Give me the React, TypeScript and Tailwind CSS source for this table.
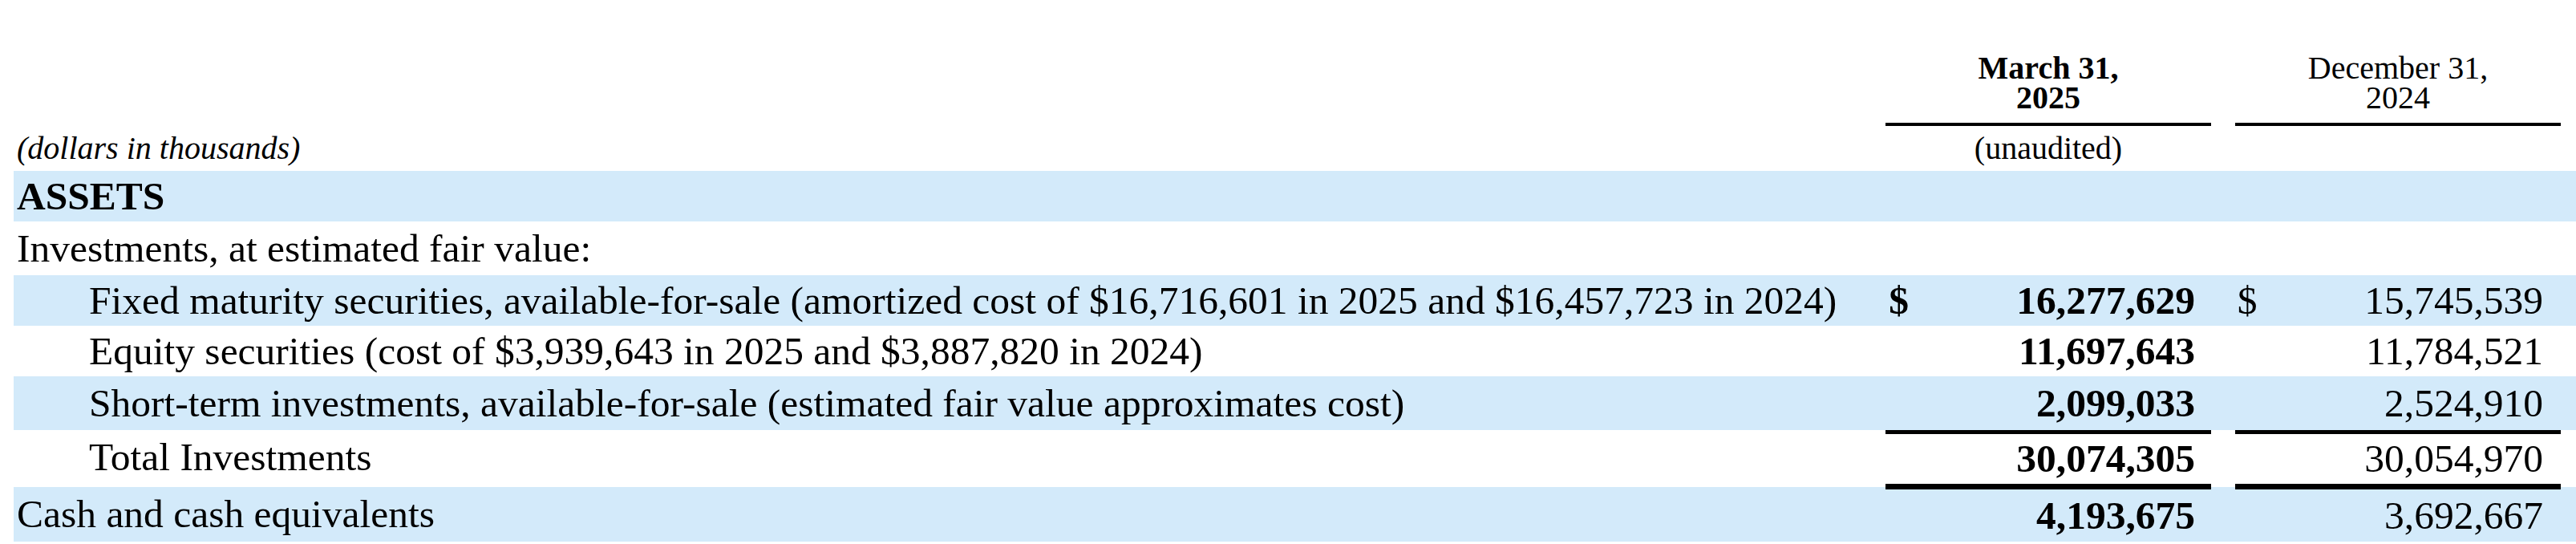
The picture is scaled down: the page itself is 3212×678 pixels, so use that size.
import React from "react";

const COLS = "grid grid-cols-[2334px_406px_30px_406px]";

type RowProps = {
  h: string;
  blue?: boolean;
  label: string;
  indent?: boolean;
  boldLabel?: boolean;
  v1?: string;
  v2?: string;
  dollar?: boolean;
  groupCls?: string;
  lead: string;
  groupLead?: string;
};

function Row({ h, blue, label, indent, boldLabel, v1, v2, dollar, groupCls = "", lead, groupLead }: RowProps) {
  const gl = groupLead ?? lead;
  return (
    <div className={`${COLS} ${h} ${blue ? "bg-[#d3eafa]" : "bg-white"}`}>
      <div className={`${lead} whitespace-nowrap ${indent ? "pl-[94px]" : "pl-[4px]"} ${boldLabel ? "font-bold" : ""}`}>
        {label}
      </div>
      <div className={`flex ${groupCls} ${gl}`}>
        <span className="w-[33px] text-center font-bold">{dollar ? "$" : ""}</span>
        <span className="flex-1 text-right pr-[20px] font-bold">{v1 ?? ""}</span>
      </div>
      <div />
      <div className={`flex ${groupCls} ${gl}`}>
        <span className="w-[30px] text-center">{dollar ? "$" : ""}</span>
        <span className="flex-1 text-right pr-[22px]">{v2 ?? ""}</span>
      </div>
    </div>
  );
}

export default function App() {
  return (
    <div className="w-[3212px] h-[678px] bg-white text-black pl-[17px] font-['Liberation_Serif','Times_New_Roman',serif] overflow-hidden">
      {/* Header */}
      <div className={`${COLS} h-[157px] text-[40px]`}>
        <div />
        <div className="self-end border-b-4 border-black pb-[13px] text-center font-bold leading-[37px]">
          <div>March 31,</div>
          <div>2025</div>
        </div>
        <div />
        <div className="self-end border-b-4 border-black pb-[13px] text-center leading-[37px]">
          <div>December 31,</div>
          <div>2024</div>
        </div>
      </div>
      <div className={`${COLS} h-[56px] text-[40px] leading-[56px]`}>
        <div className="pl-[4px] italic">(dollars in thousands)</div>
        <div className="text-center">(unaudited)</div>
        <div />
        <div />
      </div>
      <div className="text-[49.5px]">
        <Row h="h-[63px]" lead="leading-[63px]" blue boldLabel label="ASSETS" />
        <Row h="h-[67px]" lead="leading-[67px]" label="Investments, at estimated fair value:" />
        <Row
          h="h-[63px]"
          lead="leading-[63px]"
          blue
          indent
          dollar
          label="Fixed maturity securities, available-for-sale (amortized cost of $16,716,601 in 2025 and $16,457,723 in 2024)"
          v1="16,277,629"
          v2="15,745,539"
        />
        <Row
          h="h-[63px]"
          lead="leading-[63px]"
          indent
          label="Equity securities (cost of $3,939,643 in 2025 and $3,887,820 in 2024)"
          v1="11,697,643"
          v2="11,784,521"
        />
        <Row
          h="h-[67px]"
          lead="leading-[67px]"
          blue
          indent
          label="Short-term investments, available-for-sale (estimated fair value approximates cost)"
          v1="2,099,033"
          v2="2,524,910"
        />
        <Row
          h="h-[71px]"
          lead="leading-[68px]"
          groupLead="leading-[62px]"
          groupCls="border-t-[5px] border-b-[4px] border-black"
          indent
          label="Total Investments"
          v1="30,074,305"
          v2="30,054,970"
        />
        <Row
          h="h-[68px]"
          lead="leading-[68px]"
          groupLead="leading-[65px]"
          groupCls="border-t-[3px] border-black"
          blue
          label="Cash and cash equivalents"
          v1="4,193,675"
          v2="3,692,667"
        />
      </div>
    </div>
  );
}
